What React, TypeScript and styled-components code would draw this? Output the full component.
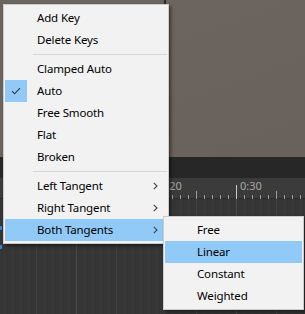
import React from "react";
import styled, { createGlobalStyle } from "styled-components";

const GlobalStyle = createGlobalStyle`
  html, body { margin: 0; padding: 0; background: #353535; overflow: hidden; }
  * { box-sizing: border-box; }
`;

const Stage = styled.div`
  position: relative;
  width: 305px;
  height: 314px;
  overflow: hidden;
  display: flex;
  flex-direction: column;
  font-family: "Noto Sans", "Open Sans", sans-serif;
`;

const Viewport = styled.div`
  height: 157px;
  display: flex;
  background: #6b635d;
`;

const LeftPane = styled.div`
  width: 164px;
  background: #6b645e;
`;

const Divider = styled.div`
  width: 2px;
  background: #2b2b2b;
`;

const SceneView = styled.div`
  flex: 1;
  background: linear-gradient(160deg, #6c645e 0%, #69615b 100%);
`;

const DarkBar = styled.div`
  height: 21px;
  background: #272727;
`;

const Ruler = styled.div`
  height: 21px;
  background: #3b3b3b;
  border-bottom: 1px solid #2a2a2a;
`;

const Grid = styled.div`
  flex: 1;
  background-color: #353535;
  background-image:
    linear-gradient(90deg, transparent 76px, #4a4a4a 76px, #4a4a4a 77px, transparent 77px),
    linear-gradient(90deg, transparent 36px, #414141 36px, #414141 37px, transparent 37px),
    linear-gradient(90deg, transparent 4px, #3a3a3a 4px, #3a3a3a 5px, transparent 5px);
  background-size: 160px 100%, 80px 100%, 8px 100%;
  background-position: 0 0, 0 0, 0 0;
  position: relative;
`;

const KeyDot = styled.div<{ $top: number }>`
  position: absolute;
  left: -2px;
  top: ${(p) => p.$top}px;
  width: 4px;
  height: 4px;
  background: #3d7fd9;
  border-radius: 1px;
`;

const Menu = styled.div<{ $left: number; $top: number; $width: number }>`
  position: absolute;
  left: ${(p) => p.$left}px;
  top: ${(p) => p.$top}px;
  width: ${(p) => p.$width}px;
  background: #f2f2f2;
  border: 1px solid #cccccc;
  padding: 2px 1px;
  box-shadow: 2px 2px 3px rgba(0, 0, 0, 0.45);
  display: flex;
  flex-direction: column;
`;

const Item = styled.div<{ $active?: boolean }>`
  position: relative;
  height: 22px;
  display: flex;
  align-items: center;
  padding-left: 32px;
  padding-bottom: 1px;
  font-size: 11.5px;
  letter-spacing: -0.15px;
  color: #000;
  background: ${(p) => (p.$active ? "#91c9f7" : "transparent")};
  white-space: nowrap;
`;

const CheckBox = styled.div`
  position: absolute;
  left: 0;
  top: 0;
  width: 22px;
  height: 22px;
  background: #91c9f7;
  display: flex;
  align-items: center;
  justify-content: center;
`;

const Arrow = styled.div`
  position: absolute;
  right: 9px;
  top: 7px;
  width: 5px;
  height: 8px;
  display: flex;
`;

const Separator = styled.div`
  height: 7px;
  display: flex;
  align-items: center;
  padding-left: 28px;
  &::after {
    content: "";
    flex: 1;
    height: 1px;
    background: #d7d7d7;
  }
`;

const Check = () => (
  <svg width="10" height="8" viewBox="0 0 10 8">
    <path d="M1 4.2 L3.6 6.8 L9 1.2" fill="none" stroke="#333" strokeWidth="1.1" />
  </svg>
);

const Chevron = () => (
  <svg width="5" height="8" viewBox="0 0 5 8">
    <path d="M0.8 0.8 L4 4 L0.8 7.2" fill="none" stroke="#444" strokeWidth="1.1" />
  </svg>
);

const RulerSvg = () => {
  const ticks: React.ReactNode[] = [];
  for (let i = 0; i < 40; i++) {
    const x = 4.5 + i * 8;
    const major = x === 76.5 || x === 156.5 || x === 236.5;
    const medium = !major && (i - 4) % 5 === 0;
    let y1 = 17;
    if (major) y1 = 7;
    else if (medium) y1 = 13;
    ticks.push(
      <line key={i} x1={x} x2={x} y1={y1} y2={21} stroke={major ? "#c8c8c8" : "#9a9a9a"} strokeWidth="1" />
    );
  }
  return (
    <svg width="305" height="21" viewBox="0 0 305 21">
      {ticks}
      <text x="160" y="12" fontSize="11" fill="#a6a6a6" fontFamily="Noto Sans, sans-serif">0:20</text>
      <text x="240" y="12" fontSize="11" fill="#a6a6a6" fontFamily="Noto Sans, sans-serif">0:30</text>
    </svg>
  );
};

type Entry = { label: string; checked?: boolean; sub?: boolean; active?: boolean } | "sep";

const mainEntries: Entry[] = [
  { label: "Add Key" },
  { label: "Delete Keys" },
  "sep",
  { label: "Clamped Auto" },
  { label: "Auto", checked: true },
  { label: "Free Smooth" },
  { label: "Flat" },
  { label: "Broken" },
  "sep",
  { label: "Left Tangent", sub: true },
  { label: "Right Tangent", sub: true },
  { label: "Both Tangents", sub: true, active: true },
];

const subEntries: Entry[] = [
  { label: "Free" },
  { label: "Linear", active: true },
  { label: "Constant" },
  { label: "Weighted" },
];

const renderEntries = (entries: Entry[]) =>
  entries.map((e, i) =>
    e === "sep" ? (
      <Separator key={i} />
    ) : (
      <Item key={i} $active={e.active}>
        {e.checked && (
          <CheckBox>
            <Check />
          </CheckBox>
        )}
        {e.label}
        {e.sub && (
          <Arrow>
            <Chevron />
          </Arrow>
        )}
      </Item>
    )
  );

export default function App() {
  return (
    <>
      <GlobalStyle />
      <Stage>
        <Viewport>
          <LeftPane />
          <Divider />
          <SceneView />
        </Viewport>
        <DarkBar />
        <Ruler>
          <RulerSvg />
        </Ruler>
        <Grid>
          <KeyDot $top={27} />
          <KeyDot $top={46} />
        </Grid>
        <Menu $left={3} $top={4} $width={166}>
          {renderEntries(mainEntries)}
        </Menu>
        <Menu $left={163} $top={216} $width={141}>
          {renderEntries(subEntries)}
        </Menu>
      </Stage>
    </>
  );
}
